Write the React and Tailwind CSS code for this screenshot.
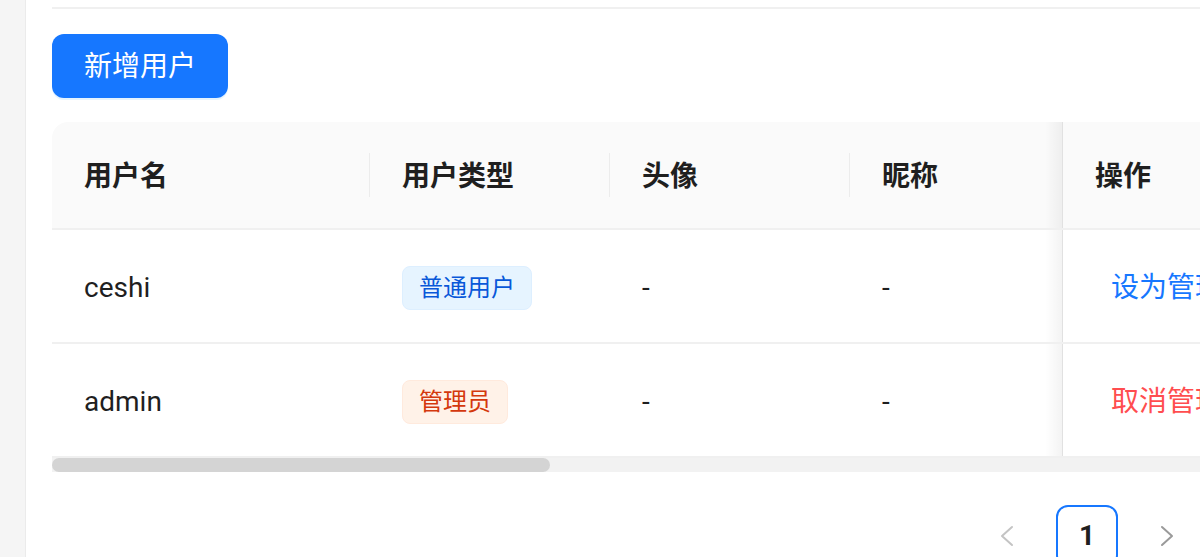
import React from "react";

const font = { fontFamily: 'Roboto, "Noto Sans CJK SC", sans-serif' };

const users = [
  { name: "ceshi", type: "普通用户", admin: false },
  { name: "admin", type: "管理员", admin: true },
];

function Chevron({ dir, color }) {
  const pts = dir === "left" ? "13,2 3,11 13,20" : "3,2 13,11 3,20";
  return (
    <svg width="16" height="22" viewBox="0 0 16 22" fill="none">
      <polyline points={pts} stroke={color} strokeWidth="2" strokeLinecap="round" strokeLinejoin="round" />
    </svg>
  );
}

function Tag({ admin, children }) {
  const cls = admin
    ? "bg-[#fff2e8] border-[#ffeadd] text-[#d4380d]"
    : "bg-[#e6f4ff] border-[#ddefff] text-[#0958d9]";
  return (
    <span className={`inline-flex h-[44px] items-center rounded-[8px] border px-[16px] text-[24px] ${cls}`}>
      {children}
    </span>
  );
}

function HeadCell({ w, children, divider = true }) {
  return (
    <div className={`relative flex h-full ${w} shrink-0 items-center px-[32px] pt-[3px] font-semibold`}>
      {children}
      {divider && <span className="absolute right-0 top-[31px] h-[44px] w-[1px] bg-[#ececec]" />}
    </div>
  );
}

export default function App() {
  return (
    <div className="flex h-[557px] w-[1200px] overflow-hidden bg-white text-[#1f1f1f]" style={font}>
      <div className="w-[26px] shrink-0 border-r border-[#ebebeb] bg-[#f5f5f5]" />
      <div className="min-w-0 flex-1 pl-[26px]">
        <div className="h-[9px] border-b-2 border-[#f0f0f0]" />
        <button className="mt-[25px] h-[64px] w-[176px] rounded-[12px] bg-[#1677ff] pt-[2px] text-[28px] text-white shadow-[0_2px_0_rgba(5,145,255,0.1)]">
          新增用户
        </button>

        <div className="mt-[24px] w-[1300px] overflow-hidden rounded-t-[16px] text-[28px]">
          <div className="flex h-[108px] border-b-2 border-[#f0f0f0] bg-[#fafafa]">
            <HeadCell w="w-[318px]">用户名</HeadCell>
            <HeadCell w="w-[240px]">用户类型</HeadCell>
            <HeadCell w="w-[240px]">头像</HeadCell>
            <HeadCell w="w-[212px]" divider={false}>昵称</HeadCell>
            <div className="relative flex h-full flex-1 items-center border-l border-[#ececec] px-[32px] pt-[3px] font-semibold">
              <span className="absolute left-[-18px] top-0 bottom-0 w-[18px] bg-gradient-to-l from-black/[0.05] to-transparent" />
              操作
            </div>
          </div>
          {users.map((u) => (
            <div key={u.name} className="flex h-[114px] border-b-2 border-[#f0f0f0]">
              <div className="flex w-[318px] shrink-0 items-center px-[32px] pt-[3px]">{u.name}</div>
              <div className="flex w-[240px] shrink-0 items-center px-[32px] pt-[3px]">
                <Tag admin={u.admin}>{u.type}</Tag>
              </div>
              <div className="flex w-[240px] shrink-0 items-center px-[32px] pt-[3px]">-</div>
              <div className="flex w-[212px] shrink-0 items-center px-[32px] pt-[3px]">-</div>
              <div className="relative flex flex-1 items-center border-l border-[#ececec] bg-white pl-[48px] pt-[3px]">
                <span className="absolute left-[-18px] top-0 bottom-0 w-[18px] bg-gradient-to-l from-black/[0.05] to-transparent" />
                <span className={u.admin ? "text-[#ff4d4f]" : "text-[#1677ff]"}>
                  {u.admin ? "取消管理员" : "设为管理员"}
                </span>
              </div>
            </div>
          ))}
          <div className="h-[14px] bg-[#f2f2f2]">
            <div className="h-full w-[498px] rounded-full bg-[#d4d4d4]" />
          </div>
        </div>

        <div className="mt-[33px] flex items-start justify-end gap-[18px] pr-[2px]">
          <div className="flex h-[62px] w-[62px] items-center justify-center">
            <Chevron dir="left" color="#c4c4c4" />
          </div>
          <div className="flex h-[62px] w-[62px] items-center justify-center rounded-[12px] border-2 border-[#1677ff] text-[28px] font-bold">
            1
          </div>
          <div className="flex h-[62px] w-[62px] items-center justify-center">
            <Chevron dir="right" color="#9a9a9a" />
          </div>
        </div>
      </div>
    </div>
  );
}
